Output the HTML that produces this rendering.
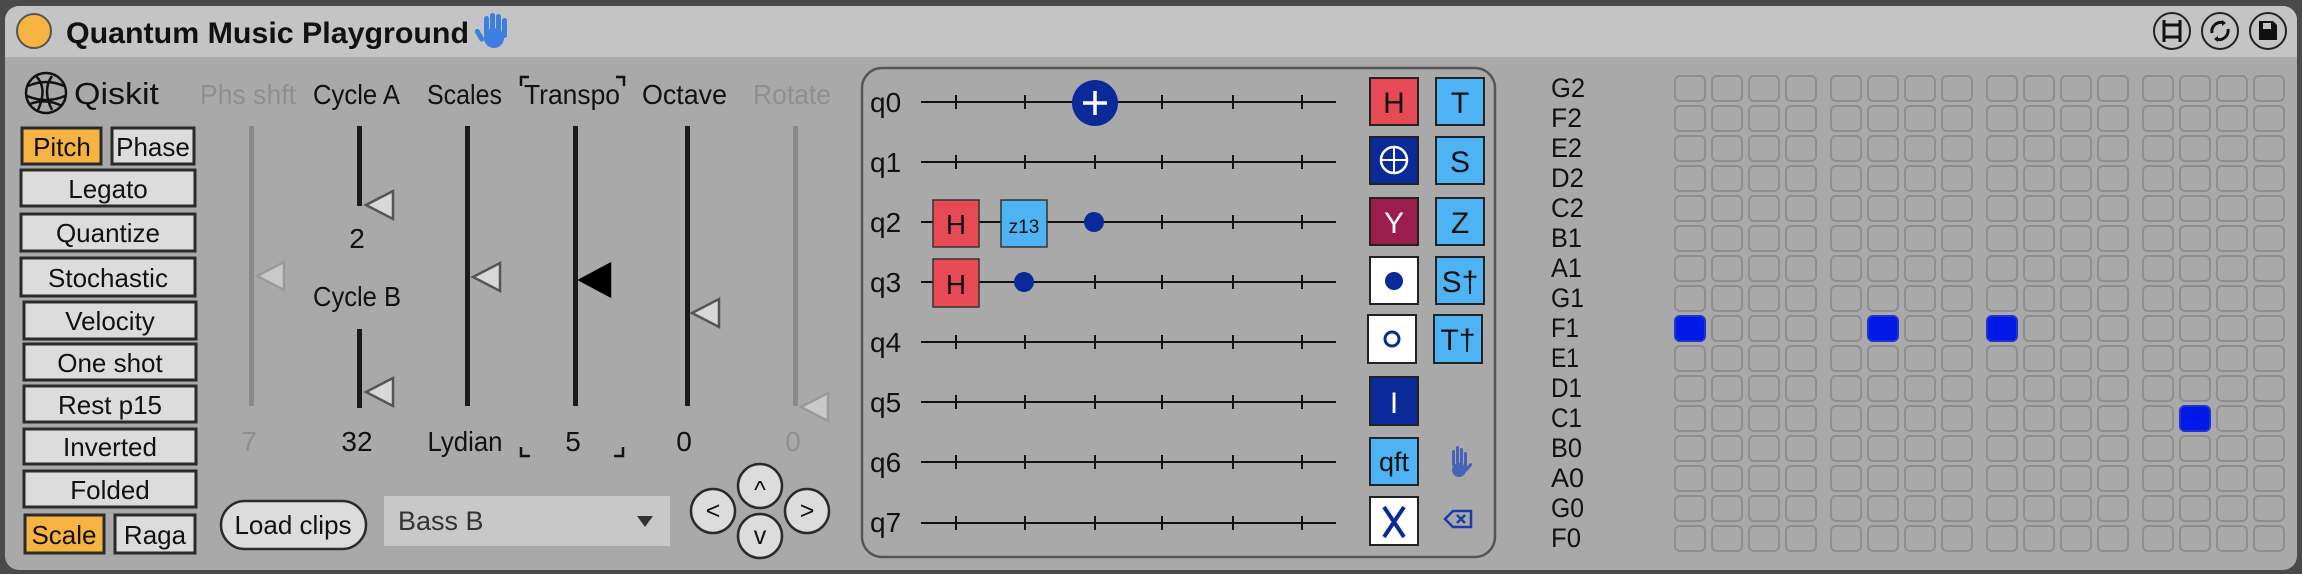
<!DOCTYPE html>
<html><head><meta charset="utf-8"><style>
html,body{margin:0;padding:0;background:#4a4a4a;}
svg{display:block}
text{font-family:"Liberation Sans",sans-serif;}
</style></head><body>
<svg width="2302" height="574" viewBox="0 0 2302 574" xmlns="http://www.w3.org/2000/svg">
<defs>
<clipPath id="c"><rect x="5" y="6" width="2292" height="564" rx="14"/></clipPath>
<pattern id="cells" x="1674" y="75" width="156" height="30" patternUnits="userSpaceOnUse">
<rect x="1" y="1" width="30" height="25" rx="5" fill="none" stroke="#8e8e8e" stroke-width="2"/>
<rect x="38" y="1" width="30" height="25" rx="5" fill="none" stroke="#8e8e8e" stroke-width="2"/>
<rect x="75" y="1" width="30" height="25" rx="5" fill="none" stroke="#8e8e8e" stroke-width="2"/>
<rect x="112" y="1" width="30" height="25" rx="5" fill="none" stroke="#8e8e8e" stroke-width="2"/>
</pattern>
</defs>
<rect width="2302" height="574" fill="#4a4a4a"/>
<g clip-path="url(#c)">
<rect x="5" y="6" width="2292" height="564" fill="#a9a9a9"/>
<rect x="5" y="6" width="2292" height="51" fill="#c4c4c4"/>
</g>
<!-- title -->
<circle cx="34" cy="31" r="17" fill="#f5b342" stroke="#555" stroke-width="2"/>
<text x="66" y="43" font-size="30" font-weight="bold" textLength="403" lengthAdjust="spacingAndGlyphs" fill="#111">Quantum Music Playground</text>
<g fill="#3d7fe0">
<ellipse cx="494" cy="38" rx="10" ry="10"/>
<rect x="484" y="16" width="5" height="20" rx="2.5"/>
<rect x="490" y="13" width="5" height="22" rx="2.5"/>
<rect x="496" y="14" width="5" height="22" rx="2.5"/>
<rect x="502" y="18" width="5" height="20" rx="2.5"/>
<rect x="477" y="28" width="5" height="14" rx="2.5" transform="rotate(-30 480 35)"/>
</g>
<!-- header right icons -->
<g fill="#c4c4c4" stroke="#222" stroke-width="2">
<circle cx="2172" cy="31" r="18"/><circle cx="2220" cy="31" r="18"/><circle cx="2268" cy="31" r="18"/>
</g>
<g stroke="#111" stroke-width="3" fill="none">
<rect x="2164" y="25" width="16" height="12"/><path d="M2164 20v5M2180 20v5M2164 37v5M2180 37v5"/>
<path d="M2212 33a9 9 0 0 1 12-10M2228 29a9 9 0 0 1-12 10"/>
</g>
<path d="M2222 20l4 3-4 3zM2218 42l-4-3 4-3z" fill="#111"/>
<path d="M2259 21h14l4 4v15h-18z" fill="#111"/><rect x="2263" y="23" width="8" height="6" fill="#c4c4c4"/>
<!-- Qiskit logo -->
<g stroke="#111" stroke-width="2.5" fill="none">
<circle cx="46" cy="93" r="20"/>
<path d="M28 86q18-8 36 0M27 96q19 8 38 0M30 104q16-6 32 2M36 76q12 12 2 34M52 76q-10 14 0 34"/>
</g>
<text x="74" y="104" font-size="31" textLength="85" lengthAdjust="spacingAndGlyphs" fill="#111">Qiskit</text>
<!-- slider labels -->
<g font-size="28">
<text x="200" y="104" textLength="96" lengthAdjust="spacingAndGlyphs" fill="#8f8f8f">Phs shft</text>
<text x="313" y="104" textLength="87" lengthAdjust="spacingAndGlyphs" fill="#111">Cycle A</text>
<text x="427" y="104" textLength="75" lengthAdjust="spacingAndGlyphs" fill="#111">Scales</text>
<text x="524" y="104" textLength="96" lengthAdjust="spacingAndGlyphs" fill="#111">Transpo</text>
<text x="642" y="104" textLength="85" lengthAdjust="spacingAndGlyphs" fill="#111">Octave</text>
<text x="753" y="104" textLength="78" lengthAdjust="spacingAndGlyphs" fill="#8f8f8f">Rotate</text>
</g>
<path d="M521 86v-9h8M616 77h8v9M521 447v9h9M614 456h9v-9" stroke="#111" stroke-width="2.5" fill="none"/>
<!-- slider lines -->
<rect x="249" y="126" width="5" height="280" fill="#8a8a8a"/>
<rect x="357" y="126" width="5" height="80" fill="#1a1a1a"/>
<rect x="357" y="329" width="5" height="79" fill="#1a1a1a"/>
<rect x="465" y="126" width="5" height="280" fill="#1a1a1a"/>
<rect x="573" y="126" width="5" height="280" fill="#1a1a1a"/>
<rect x="685" y="126" width="5" height="280" fill="#1a1a1a"/>
<rect x="793" y="126" width="5" height="280" fill="#8a8a8a"/>
<!-- triangles -->
<g stroke-width="2.5">
<polygon points="257,276 284,262 284,290" fill="#c9c9c9" stroke="#9a9a9a"/>
<polygon points="366,205 393,191 393,219" fill="#d8d8d8" stroke="#555"/>
<polygon points="366,392 393,378 393,406" fill="#d8d8d8" stroke="#555"/>
<polygon points="473,277 500,263 500,291" fill="#d8d8d8" stroke="#555"/>
<polygon points="580,280 610,264 610,296" fill="#000" stroke="#000"/>
<polygon points="692,313 719,299 719,327" fill="#d8d8d8" stroke="#555"/>
<polygon points="801,407 828,393 828,421" fill="#c9c9c9" stroke="#9a9a9a"/>
</g>
<!-- values -->
<g font-size="28" text-anchor="middle">
<text x="249" y="451" fill="#8f8f8f">7</text>
<text x="357" y="248" fill="#111">2</text>
<text x="357" y="306" fill="#111" textLength="88" lengthAdjust="spacingAndGlyphs">Cycle B</text>
<text x="357" y="451" fill="#111">32</text>
<text x="465" y="451" fill="#111" textLength="75" lengthAdjust="spacingAndGlyphs">Lydian</text>
<text x="573" y="451" fill="#111">5</text>
<text x="684" y="451" fill="#111">0</text>
<text x="793" y="451" fill="#8f8f8f">0</text>
</g>
<!-- left buttons -->
<g stroke="#2a2a2a" stroke-width="3">
<rect x="22" y="128" width="79" height="36" fill="#f5b342"/>
<rect x="112" y="128" width="82" height="36" fill="#dcdcdc"/>
<rect x="21" y="170" width="174" height="36" fill="#dcdcdc"/>
<rect x="21" y="214" width="174" height="37" fill="#dcdcdc"/>
<rect x="21" y="258" width="174" height="38" fill="#dcdcdc"/>
<rect x="24" y="302" width="172" height="37" fill="#dcdcdc"/>
<rect x="24" y="344" width="172" height="36" fill="#dcdcdc"/>
<rect x="24" y="386" width="172" height="36" fill="#dcdcdc"/>
<rect x="24" y="429" width="172" height="35" fill="#dcdcdc"/>
<rect x="24" y="471" width="172" height="36" fill="#dcdcdc"/>
<rect x="25" y="515" width="79" height="38" fill="#f5b342"/>
<rect x="115" y="515" width="80" height="38" fill="#dcdcdc"/>
</g>
<g font-size="26" text-anchor="middle" fill="#111">
<text x="62" y="156">Pitch</text>
<text x="153" y="156">Phase</text>
<text x="108" y="198">Legato</text>
<text x="108" y="242">Quantize</text>
<text x="108" y="287">Stochastic</text>
<text x="110" y="330">Velocity</text>
<text x="110" y="372">One shot</text>
<text x="110" y="414">Rest p15</text>
<text x="110" y="456">Inverted</text>
<text x="110" y="499">Folded</text>
<text x="64" y="544">Scale</text>
<text x="155" y="544">Raga</text>
</g>
<!-- load clips / dropdown / nav -->
<rect x="221" y="501" width="145" height="48" rx="24" fill="#dcdcdc" stroke="#2a2a2a" stroke-width="2.5"/>
<text x="293" y="534" font-size="26" text-anchor="middle" fill="#111">Load clips</text>
<rect x="384" y="496" width="286" height="50" fill="#c8c8c8"/>
<text x="398" y="530" font-size="27" fill="#333">Bass B</text>
<polygon points="637,516 653,516 645,527" fill="#333"/>
<g fill="#dcdcdc" stroke="#2a2a2a" stroke-width="2.5">
<circle cx="713" cy="511" r="22"/><circle cx="760" cy="486" r="22"/><circle cx="807" cy="511" r="22"/><circle cx="760" cy="536" r="22"/>
</g>
<g font-size="25" text-anchor="middle" fill="#111">
<text x="713" y="519">&lt;</text><text x="807" y="519">&gt;</text><text x="760" y="498">^</text><text x="760" y="544">v</text>
</g>
<!-- circuit panel -->
<rect x="862" y="68" width="633" height="489" rx="20" fill="none" stroke="#555" stroke-width="2.5"/>
<g font-size="28" fill="#111">
<text x="870" y="112">q0</text><text x="870" y="172">q1</text><text x="870" y="232">q2</text><text x="870" y="292">q3</text>
<text x="870" y="352">q4</text><text x="870" y="412">q5</text><text x="870" y="472">q6</text><text x="870" y="532">q7</text>
</g>
<g stroke="#111" stroke-width="2">
<path d="M921 102H1336M921 162H1336M921 222H1336M921 282H1336M921 342H1336M921 402H1336M921 462H1336M921 523H1336"/>
<path d="M956 95v14M1025 95v14M1162 95v14M1233 95v14M1302 95v14
M956 155v14M1025 155v14M1095 155v14M1162 155v14M1233 155v14M1302 155v14
M1162 215v14M1233 215v14M1302 215v14
M1095 275v14M1162 275v14M1233 275v14M1302 275v14
M956 335v14M1025 335v14M1095 335v14M1162 335v14M1233 335v14M1302 335v14
M956 395v14M1025 395v14M1095 395v14M1162 395v14M1233 395v14M1302 395v14
M956 455v14M1025 455v14M1095 455v14M1162 455v14M1233 455v14M1302 455v14
M956 516v14M1025 516v14M1095 516v14M1162 516v14M1233 516v14M1302 516v14"/>
</g>
<ellipse cx="1095" cy="103" rx="23" ry="23" fill="#0a2a9a"/>
<path d="M1083 103h24M1095 91v24" stroke="#fff" stroke-width="3.5"/>
<rect x="933" y="200" width="46" height="47" fill="#e84a55" stroke="#333" stroke-width="1.5"/>
<rect x="1001" y="200" width="46" height="47" fill="#4db3f5" stroke="#333" stroke-width="1.5"/>
<rect x="933" y="259" width="46" height="48" fill="#e84a55" stroke="#333" stroke-width="1.5"/>
<ellipse cx="1094" cy="222" rx="10" ry="10" fill="#0a2a9a"/>
<ellipse cx="1024" cy="282" rx="10" ry="10" fill="#0a2a9a"/>
<g font-size="28" text-anchor="middle" fill="#111">
<text x="956" y="234">H</text><text x="956" y="294">H</text>
</g>
<text x="1024" y="233" font-size="19" text-anchor="middle" fill="#111">z13</text>
<!-- palette -->
<g stroke="#222" stroke-width="2">
<rect x="1370" y="78" width="48" height="47" fill="#e84a55"/>
<rect x="1436" y="78" width="48" height="47" fill="#4db3f5"/>
<rect x="1370" y="137" width="48" height="47" fill="#0a2a9a"/>
<rect x="1436" y="137" width="48" height="47" fill="#4db3f5"/>
<rect x="1370" y="198" width="48" height="47" fill="#9b1d4b"/>
<rect x="1436" y="198" width="48" height="47" fill="#4db3f5"/>
<rect x="1370" y="257" width="48" height="47" fill="#fff"/>
<rect x="1436" y="257" width="48" height="47" fill="#4db3f5"/>
<rect x="1368" y="315" width="48" height="48" fill="#fff"/>
<rect x="1434" y="315" width="48" height="48" fill="#4db3f5"/>
<rect x="1370" y="377" width="48" height="48" fill="#0a2a9a"/>
<rect x="1370" y="438" width="48" height="47" fill="#4db3f5"/>
<rect x="1370" y="497" width="48" height="48" fill="#fff"/>
</g>
<g font-size="30" text-anchor="middle" fill="#111">
<text x="1394" y="113">H</text><text x="1460" y="113">T</text>
<text x="1460" y="172">S</text><text x="1394" y="233" fill="#fff">Y</text><text x="1460" y="233">Z</text>
<text x="1460" y="292">S†</text><text x="1458" y="350">T†</text>
<text x="1394" y="413" fill="#fff">I</text>
<text x="1394" y="471" font-size="27">qft</text>
</g>
<circle cx="1394" cy="160" r="13" fill="none" stroke="#fff" stroke-width="2.5"/>
<path d="M1381 160h26M1394 147v26" stroke="#fff" stroke-width="2"/>
<circle cx="1394" cy="281" r="9" fill="#0a2a9a"/>
<circle cx="1392" cy="339" r="7" fill="none" stroke="#0a2a9a" stroke-width="3"/>
<path d="M1384 507l20 30M1404 507l-20 30" stroke="#0a2a9a" stroke-width="4"/>
<g fill="#3a56b8" opacity="0.85">
<ellipse cx="1459" cy="470" rx="7" ry="7"/>
<rect x="1452" y="450" width="3" height="16" rx="1.5"/><rect x="1456" y="446" width="3" height="18" rx="1.5"/>
<rect x="1460" y="448" width="3" height="18" rx="1.5"/><rect x="1464" y="452" width="3" height="16" rx="1.5"/>
<rect x="1467" y="462" width="3" height="10" rx="1.5" transform="rotate(40 1468 467)"/>
</g>
<path d="M1445 519l8-8h18v16h-18z" fill="none" stroke="#1a3aa8" stroke-width="2.5"/>
<path d="M1457 515l8 8M1465 515l-8 8" stroke="#1a3aa8" stroke-width="2.5"/>
<!-- note grid -->
<g font-size="27" fill="#111">
<text x="1551" y="97" textLength="34" lengthAdjust="spacingAndGlyphs">G2</text>
<text x="1551" y="127" textLength="31" lengthAdjust="spacingAndGlyphs">F2</text>
<text x="1551" y="157" textLength="31" lengthAdjust="spacingAndGlyphs">E2</text>
<text x="1551" y="187" textLength="33" lengthAdjust="spacingAndGlyphs">D2</text>
<text x="1551" y="217" textLength="33" lengthAdjust="spacingAndGlyphs">C2</text>
<text x="1551" y="247" textLength="31" lengthAdjust="spacingAndGlyphs">B1</text>
<text x="1551" y="277" textLength="31" lengthAdjust="spacingAndGlyphs">A1</text>
<text x="1551" y="307" textLength="33" lengthAdjust="spacingAndGlyphs">G1</text>
<text x="1551" y="337" textLength="28" lengthAdjust="spacingAndGlyphs">F1</text>
<text x="1551" y="367" textLength="28" lengthAdjust="spacingAndGlyphs">E1</text>
<text x="1551" y="397" textLength="31" lengthAdjust="spacingAndGlyphs">D1</text>
<text x="1551" y="427" textLength="31" lengthAdjust="spacingAndGlyphs">C1</text>
<text x="1551" y="457" textLength="31" lengthAdjust="spacingAndGlyphs">B0</text>
<text x="1551" y="487" textLength="33" lengthAdjust="spacingAndGlyphs">A0</text>
<text x="1551" y="517" textLength="33" lengthAdjust="spacingAndGlyphs">G0</text>
<text x="1551" y="547" textLength="30" lengthAdjust="spacingAndGlyphs">F0</text>
</g>
<rect x="1674" y="75" width="624" height="480" fill="url(#cells)"/>
<g fill="#0019e8" stroke="#2233cc" stroke-width="2">
<rect x="1675" y="316" width="30" height="25" rx="5"/>
<rect x="1868" y="316" width="30" height="25" rx="5"/>
<rect x="1987" y="316" width="30" height="25" rx="5"/>
<rect x="2180" y="406" width="30" height="25" rx="5"/>
</g>
</svg>
</body></html>
